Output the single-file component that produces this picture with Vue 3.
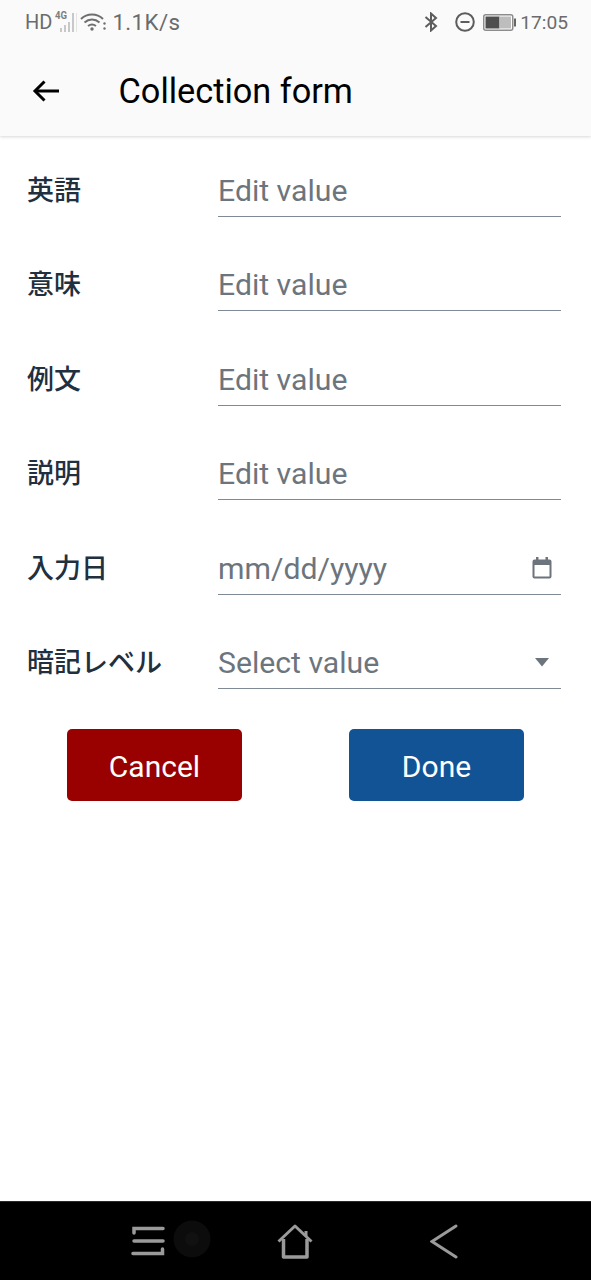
<script setup>
const rows = [
  { label: '英語', value: 'Edit value' },
  { label: '意味', value: 'Edit value' },
  { label: '例文', value: 'Edit value' },
  { label: '説明', value: 'Edit value' },
  { label: '入力日', value: 'mm/dd/yyyy', icon: 'cal' },
  { label: '暗記レベル', value: 'Select value', icon: 'caret' },
]
</script>

<template>
  <div class="screen">
    <header class="top">
      <div class="status">
        <div class="st-left">
          <span class="hd">HD</span>
          <svg class="sig" width="25" height="24" viewBox="0 0 25 24">
            <text x="2" y="9" font-size="10.500" font-weight="700" fill="#7d7d7d" font-family="Roboto, sans-serif" textLength="12" lengthAdjust="spacingAndGlyphs">4G</text>
            <g fill="#c8c8c8"><rect x="7" y="18" width="2" height="4"/><rect x="11" y="15" width="2" height="7"/><rect x="15" y="12" width="2" height="10"/><rect x="19" y="3" width="2" height="19"/><rect x="23" y="3" width="1" height="19" fill="#e4e4e4"/></g>
          </svg>
          <svg class="wifi" width="26" height="20" viewBox="0 0 26 20" fill="none" stroke="#6f6f6f" stroke-width="2">
            <path d="M1 7 C7 1 17 1 23 7"/>
            <path d="M4.500 10.500 C9 6.500 15 6.500 19.500 10.500"/>
            <path d="M8 14 C11 11.800 13 11.800 16 14"/>
            <circle cx="12" cy="17" r="1.700" fill="#6f6f6f" stroke="none"/>
            <circle cx="24.500" cy="11.500" r="1.200" fill="#6f6f6f" stroke="none"/>
            <circle cx="24.500" cy="16.500" r="1.200" fill="#6f6f6f" stroke="none"/>
          </svg>
          <span class="speed">1.1K/s</span>
        </div>
        <div class="st-right">
          <svg width="14" height="20" viewBox="0 0 14 20" fill="none" stroke="#5c5c5c" stroke-width="2"><path d="M1.500 5 L12 14 L7 18.500 V1.500 L12 6 L1.500 15"/></svg>
          <svg class="dnd" width="20" height="20" viewBox="0 0 20 20" fill="none" stroke="#5c5c5c" stroke-width="2"><circle cx="10" cy="10" r="8.800"/><path d="M5.500 10 H14.500"/></svg>
          <svg class="batt" width="33" height="17" viewBox="0 0 33 17">
            <rect x="0.750" y="0.750" width="29" height="15.500" rx="2" fill="#fff" stroke="#8c8c8c" stroke-width="1.500"/>
            <rect x="2.500" y="2.500" width="14" height="12" fill="#4e4e4e"/>
            <rect x="16.500" y="2.500" width="11.500" height="12" fill="#bdbdbd"/>
            <rect x="31" y="4.500" width="2" height="8" fill="#666"/>
          </svg>
          <span class="time">17:05</span>
        </div>
      </div>
      <div class="bar">
        <svg class="back" width="30" height="30" viewBox="0 0 30 30" fill="none" stroke="#000" stroke-width="3"><path d="M28 15 H4"/><path d="M13.500 5.500 L4 15 L13.500 24.500"/></svg>
        <h1>Collection form</h1>
      </div>
    </header>

    <main class="form">
      <div v-for="row in rows" :key="row.label" class="row">
        <label class="lbl">{{ row.label }}</label>
        <div class="field">
          <span class="val">{{ row.value }}</span>
          <svg v-if="row.icon === 'cal'" class="ico" width="22" height="24" viewBox="0 0 22 24">
            <path fill="#6c757d" fill-rule="evenodd" d="M5 1h2.500v2.500h7V1H17v2.500h1.500A2 2 0 0 1 20.500 5.500v15a2 2 0 0 1-2 2h-15a2 2 0 0 1-2-2v-15a2 2 0 0 1 2-2H5zM3.500 9v11.500h15V9z"/>
          </svg>
          <svg v-if="row.icon === 'caret'" class="ico" width="22" height="24" viewBox="0 0 22 24">
            <path fill="#6c757d" d="M4 8 H18 L11 16.500 Z"/>
          </svg>
        </div>
      </div>
      <div class="actions">
        <button class="btn cancel">Cancel</button>
        <button class="btn done">Done</button>
      </div>
    </main>

    <nav class="navbar">
      <svg class="menu" width="34" height="32" viewBox="0 0 34 32" fill="none" stroke="#9a9a9a" stroke-width="3.500" stroke-linecap="round">
        <path d="M3 9 V4.500 H32"/><path d="M3 17 H32"/><path d="M2 29.500 H31.500 V25"/>
      </svg>
      <svg class="dot" width="38" height="38" viewBox="0 0 38 38"><circle cx="19" cy="19" r="18.500" fill="#0c0c0c"/><circle cx="19" cy="19" r="7" fill="#111"/></svg>
      <svg class="home" width="36" height="36" viewBox="0 0 36 36" fill="none" stroke="#9a9a9a" stroke-width="3" stroke-linejoin="round">
        <path d="M1.500 17.500 L18 2 L34.500 17.500"/><path d="M29 7 V12"/><path d="M6.500 15 V33 H30 V15" stroke-width="3.500"/>
      </svg>
      <svg class="nback" width="28" height="36" viewBox="0 0 28 36" fill="none" stroke="#9a9a9a" stroke-width="3" stroke-linecap="round"><path d="M26 2 L2 17.500 L26 33"/></svg>
    </nav>
  </div>
</template>

<style scoped>
.screen {
  width: 591px;
  height: 1280px;
  display: flex;
  flex-direction: column;
  background: #fff;
  font-family: Roboto, "Noto Sans CJK JP", sans-serif;
  overflow: hidden;
}
.top {
  height: 136px;
  flex: none;
  background: #fafafa;
  box-shadow: 0 1px 3px rgba(0, 0, 0, 0.16);
  display: flex;
  flex-direction: column;
}
.status {
  height: 44px;
  display: flex;
  justify-content: space-between;
  align-items: center;
  padding: 0 23px 0 25px;
  color: #6b6b6b;
}
.st-left, .st-right { display: flex; align-items: center; }
.hd { font-size: 20px; }
.sig { margin-left: 1px; }
.wifi { margin-left: 2px; }
.speed { font-size: 22.300px; margin-left: 6px; letter-spacing: 0.4px; }
.dnd { margin-left: 17px; }
.batt { margin-left: 8px; }
.time { font-size: 19.200px; margin-left: 4px; }
.bar {
  flex: 1;
  display: flex;
  align-items: center;
  padding: 2px 0 0 31px;
}
.back { flex: none; }
h1 {
  margin: 0 0 0 57.500px;
  font-size: 34.300px;
  font-weight: 400;
  color: #000;
}
.form {
  flex: 1;
  padding: 33px 30px 0 27px;
}
.row {
  height: 48px;
  display: flex;
  margin-bottom: 46.400px;
}
.lbl {
  width: 191px;
  flex: none;
  font-size: 27px;
  line-height: 44px;
  font-weight: 500;
  color: #212f3f;
}
.field {
  flex: 1;
  height: 48px;
  display: flex;
  justify-content: space-between;
  align-items: center;
  padding-bottom: 4px;
  border-bottom: 1px solid #7f8a94;
  box-sizing: border-box;
}
.val {
  font-size: 30.200px;
  color: #6c757d;
}
.ico { margin-right: 8px; }
.actions {
  display: flex;
  justify-content: space-between;
  padding: 0 37px 0 40px;
  margin-top: -6.500px;
}
.btn {
  width: 175px;
  height: 72px;
  border: none;
  border-radius: 5px;
  color: #fff;
  font-family: Roboto, sans-serif;
  font-size: 30px;
  padding: 3px 0 0;
}
.cancel { background: #990000; }
.done { background: #125396; }
.navbar {
  height: 79px;
  flex: none;
  box-sizing: border-box;
  background: #000;
  border-top: 1px solid #2a2a2a;
  position: relative;
}
.navbar svg { position: absolute; }
.menu { left: 131px; top: 22px; }
.dot { left: 173px; top: 18px; }
.home { left: 277px; top: 22px; }
.nback { left: 429.500px; top: 22px; }
</style>
